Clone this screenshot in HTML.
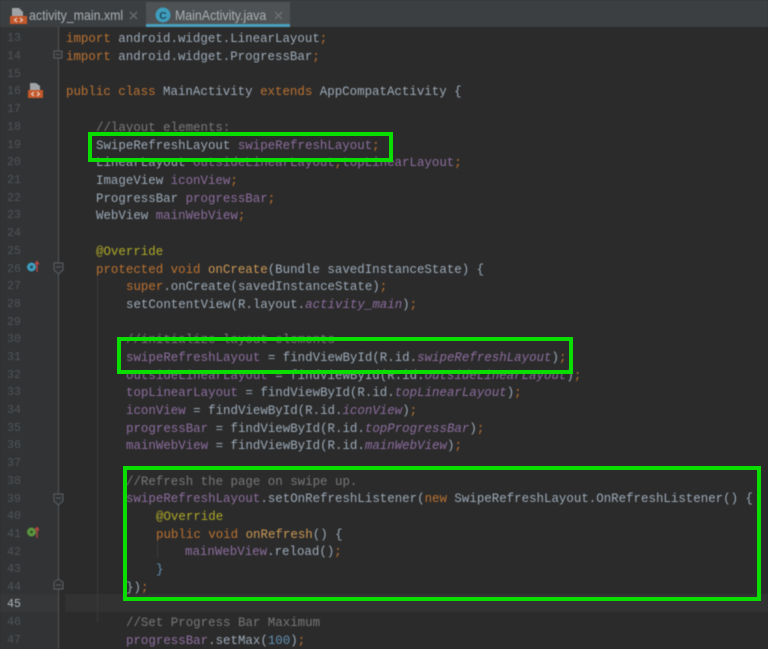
<!DOCTYPE html>
<html><head><meta charset="utf-8">
<style>
html,body{margin:0;padding:0;background:#2b2b2b}
#wrap{position:relative;width:768px;height:649px;overflow:hidden;background:#2b2b2b}
#root{position:absolute;left:0;top:0;width:768px;height:649px;overflow:hidden;background:#2b2b2b;filter:blur(.55px)}
#tabs{position:absolute;left:0;top:0;width:768px;height:27px;background:#3c3f41}
#tab2{position:absolute;left:146px;top:2px;width:144px;height:25px;background:#4e5254}
#ul{position:absolute;left:146px;top:24px;width:144px;height:3px;background:#4a9fbd}
.tt{position:absolute;top:7px;font:13.6px/18px "Liberation Sans",sans-serif;color:#a9b0b5;white-space:nowrap;transform:scaleX(.91);transform-origin:0 0}
#gut{position:absolute;left:0;top:27px;width:58px;height:622px;background:#313335}
#gl{position:absolute;left:58px;top:27px;width:1px;height:622px;background:#555}
#cur{position:absolute;left:65px;top:594px;width:703px;height:18px;background:#323232}
#cur2{position:absolute;left:0;top:594px;width:58px;height:18px;background:#353739}
.n{position:absolute;left:7px;width:14px;font:11.6px/18px "Liberation Mono",monospace;color:#505457;white-space:nowrap}
.l{position:absolute;font:12.45px/18px "Liberation Mono",monospace;color:#9caab8;white-space:pre}
.k{color:#bb7231}.f{color:#8c6d9e}.i{color:#8c6d9e;font-style:italic}.c{color:#787878}.a{color:#aea828}.d{color:#bb7231}.b{color:#6490b2}.m{color:#cc9855}
.g{position:absolute;width:1px;background:#3a3a3a}
#boxes{position:absolute;left:0;top:0;width:768px;height:649px;filter:blur(.3px)}
.box{position:absolute;border:4px solid #0ade00;box-sizing:border-box}
</style></head><body>
<div id="wrap">
<div id="root">
<div id="tabs"></div>
<div id="tab2"></div>
<div id="ul"></div>
<svg style="position:absolute;left:0;top:0" width="768" height="110">
<path d="M12 8h7l4 4v4H12z" fill="#a0a4a7"/>
<rect x="10" y="16" width="17" height="8" fill="#c4582a"/>
<path d="M17 18l-2.500 2 2.500 2M20 18l2.500 2-2.500 2" stroke="#eee" stroke-width=".9" fill="none"/>
<path d="M130 12l7 7M137 12l-7 7" stroke="#6a6d70" stroke-width="1.300"/>
<circle cx="163" cy="15" r="7.500" fill="#3f9dbd"/>
<text x="163" y="19" font-family="Liberation Sans,sans-serif" font-size="10.500" font-weight="bold" fill="#1f4a5c" text-anchor="middle">C</text>
<path d="M275 12l7 7M282 12l-7 7" stroke="#6e7275" stroke-width="1.300"/>
</svg>
<div class="tt" style="left:29px">activity_main.xml</div>
<div class="tt" style="left:175px">MainActivity.java</div>
<div id="gut"></div>
<div id="cur2"></div>
<div id="cur"></div>
<div id="gl"></div>
<div class="g" style="left:97px;top:272px;height:350px"></div>
<div class="g" style="left:157px;top:540px;height:18px"></div>

<div class="n" style="top:30px">13</div><div class="n" style="top:48px">14</div><div class="n" style="top:66px">15</div><div class="n" style="top:83px">16</div><div class="n" style="top:101px">17</div><div class="n" style="top:119px">18</div><div class="n" style="top:137px">19</div><div class="n" style="top:154px">20</div><div class="n" style="top:172px">21</div><div class="n" style="top:190px">22</div><div class="n" style="top:207px">23</div><div class="n" style="top:225px">24</div><div class="n" style="top:243px">25</div><div class="n" style="top:261px">26</div><div class="n" style="top:278px">27</div><div class="n" style="top:296px">28</div><div class="n" style="top:314px">29</div><div class="n" style="top:331px">30</div><div class="n" style="top:349px">31</div><div class="n" style="top:367px">32</div><div class="n" style="top:384px">33</div><div class="n" style="top:402px">34</div><div class="n" style="top:420px">35</div><div class="n" style="top:437px">36</div><div class="n" style="top:455px">37</div><div class="n" style="top:473px">38</div><div class="n" style="top:491px">39</div><div class="n" style="top:508px">40</div><div class="n" style="top:526px">41</div><div class="n" style="top:544px">42</div><div class="n" style="top:561px">43</div><div class="n" style="top:579px">44</div><div class="n" style="top:596px;color:#b0b4b7">45</div><div class="n" style="top:614px">46</div><div class="n" style="top:632px">47</div>

<div class="l" style="left:66px;top:30px"><span class="k">import</span> android.widget.LinearLayout<span class="d">;</span></div>
<div class="l" style="left:66px;top:48px"><span class="k">import</span> android.widget.ProgressBar<span class="d">;</span></div>
<div class="l" style="left:66px;top:83px"><span class="k">public class</span> MainActivity <span class="k">extends</span> AppCompatActivity {</div>
<div class="l" style="left:96px;top:119px"><span class="c">//layout elements:</span></div>
<div class="l" style="left:96px;top:154px">LinearLayout <span class="f">outsideLinearLayout</span><span class="d">,</span><span class="f">topLinearLayout</span><span class="d">;</span></div>
<div class="l" style="left:96px;top:137px">SwipeRefreshLayout <span class="f">swipeRefreshLayout</span><span class="d">;</span></div>
<div class="l" style="left:96px;top:172px">ImageView <span class="f">iconView</span><span class="d">;</span></div>
<div class="l" style="left:96px;top:190px">ProgressBar <span class="f">progressBar</span><span class="d">;</span></div>
<div class="l" style="left:96px;top:207px">WebView <span class="f">mainWebView</span><span class="d">;</span></div>
<div class="l" style="left:96px;top:243px"><span class="a">@Override</span></div>
<div class="l" style="left:96px;top:261px"><span class="k">protected void</span> <span class="m">onCreate</span>(Bundle savedInstanceState) {</div>
<div class="l" style="left:126px;top:278px"><span class="k">super</span>.onCreate(savedInstanceState)<span class="d">;</span></div>
<div class="l" style="left:126px;top:296px">setContentView(R.layout.<span class="i">activity_main</span>)<span class="d">;</span></div>
<div class="l" style="left:126px;top:331px"><span class="c">//initialize layout elements</span></div>
<div class="l" style="left:126px;top:367px"><span class="f">outsideLinearLayout</span> = findViewById(R.id.<span class="i">outsideLinearLayout</span>)<span class="d">;</span></div>
<div class="l" style="left:126px;top:349px"><span class="f">swipeRefreshLayout</span> = findViewById(R.id.<span class="i">swipeRefreshLayout</span>)<span class="d">;</span></div>
<div class="l" style="left:126px;top:384px"><span class="f">topLinearLayout</span> = findViewById(R.id.<span class="i">topLinearLayout</span>)<span class="d">;</span></div>
<div class="l" style="left:126px;top:402px"><span class="f">iconView</span> = findViewById(R.id.<span class="i">iconView</span>)<span class="d">;</span></div>
<div class="l" style="left:126px;top:420px"><span class="f">progressBar</span> = findViewById(R.id.<span class="i">topProgressBar</span>)<span class="d">;</span></div>
<div class="l" style="left:126px;top:437px"><span class="f">mainWebView</span> = findViewById(R.id.<span class="i">mainWebView</span>)<span class="d">;</span></div>
<div class="l" style="left:126px;top:473px"><span class="c">//Refresh the page on swipe up.</span></div>
<div class="l" style="left:126px;top:490px"><span class="f">swipeRefreshLayout</span>.setOnRefreshListener(<span class="k">new</span> SwipeRefreshLayout.OnRefreshListener() {</div>
<div class="l" style="left:156px;top:508px"><span class="a">@Override</span></div>
<div class="l" style="left:156px;top:526px"><span class="k">public void</span> <span class="m">onRefresh</span>() {</div>
<div class="l" style="left:185px;top:543px"><span class="f">mainWebView</span>.reload()<span class="d">;</span></div>
<div class="l" style="left:156px;top:561px"><span class="b">}</span></div>
<div class="l" style="left:126px;top:579px">})<span class="d">;</span></div>
<div class="l" style="left:126px;top:614px"><span class="c">//Set Progress Bar Maximum</span></div>
<div class="l" style="left:126px;top:632px"><span class="f">progressBar</span>.setMax(<span class="b">100</span>)<span class="d">;</span></div>

<svg style="position:absolute;left:0;top:0" width="768" height="649" fill="none">
<path d="M30 83h6l4 3v4H30z" fill="#a0a4a7"/>
<rect x="28" y="90" width="15" height="8" fill="#c4582a"/>
<path d="M34 92l-2.500 2 2.500 2M37 92l2.500 2-2.500 2" stroke="#eee" stroke-width=".9"/>
<path d="M54 51h8v7h-8zM56 54.500h4" stroke="#5c6063" fill="#313335"/>
<path d="M54 263h9v7l-4.500 4-4.500-4zM56 267h5" stroke="#5c6063" fill="#313335"/>
<path d="M54 494h9v7l-4.500 4-4.500-4zM56 498h5" stroke="#5c6063" fill="#313335"/>
<path d="M54 589v-7l4.500-3 4.500 3v7zM56 585h5" stroke="#5c6063" fill="#313335"/>
<circle cx="31.500" cy="267" r="4.500" fill="#3f9dbd"/><circle cx="31.500" cy="267" r="1.500" fill="#1f4a5c"/>
<path d="M37 272v-10M35 264.500l2-3 2 3" stroke="#b8483f" stroke-width="1.300"/>
<circle cx="31.500" cy="532" r="4.500" fill="#5c9440"/><circle cx="31.500" cy="532" r="1.300" fill="#2a4a1c"/>
<path d="M37 538v-10M35 530.500l2-3 2 3" stroke="#b8483f" stroke-width="1.300"/>
</svg>
</div>
<div id="boxes">
<div class="box" style="left:88px;top:132px;width:305px;height:30px"></div>
<div class="box" style="left:117px;top:337px;width:456px;height:37px"></div>
<div class="box" style="left:123px;top:466px;width:638px;height:135px"></div>
</div>
</div>
</body></html>
